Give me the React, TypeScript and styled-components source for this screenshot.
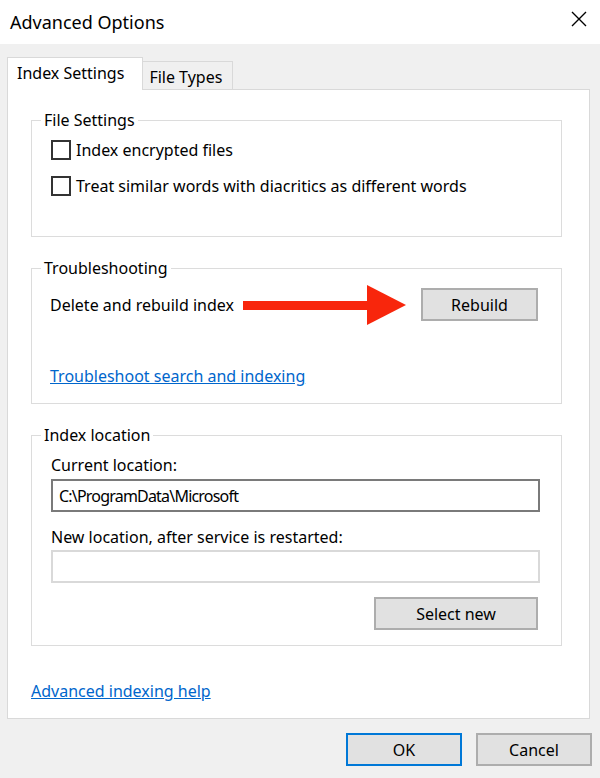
import React from 'react';
import styled, { createGlobalStyle } from 'styled-components';

const colors = {
    face: '#f0f0f0',
    white: '#ffffff',
    text: '#000000',
    panelBorder: '#d9d9d9',
    groupBorder: '#dcdcdc',
    buttonFace: '#e1e1e1',
    buttonBorder: '#adadad',
    focus: '#0078d7',
    link: '#0066cc',
    arrow: '#f8260c',
};

const GlobalStyle = createGlobalStyle`
    html, body {
        margin: 0;
        padding: 0;
        background: ${colors.white};
    }
    body {
        font-family: "Segoe UI", "Noto Sans", "Open Sans", sans-serif;
        font-size: 16px;
        color: ${colors.text};
    }
    * {
        box-sizing: border-box;
    }
`;

const Window = styled.div`
    width: 600px;
    height: 778px;
    display: flex;
    flex-direction: column;
    background: ${colors.face};
`;

const TitleBar = styled.div`
    height: 44px;
    flex-shrink: 0;
    background: ${colors.white};
    display: flex;
    align-items: center;
    justify-content: space-between;
    padding: 0 13px 0 10px;
`;

const Title = styled.span`
    font-size: 18px;
    line-height: 24px;
    margin-top: -1px;
`;

const CloseIcon = styled.svg`
    width: 16px;
    height: 16px;
    margin-top: -6px;
`;

const Body = styled.div`
    flex: 1;
    display: flex;
    flex-direction: column;
    padding: 13px 10px 0 7px;
`;

const TabStrip = styled.div`
    display: flex;
    align-items: flex-end;
    height: 32px;
    position: relative;
    z-index: 1;
`;

const Tab = styled.div<{ $active?: boolean }>`
    display: flex;
    align-items: center;
    border: 1px solid ${colors.panelBorder};
    line-height: 20px;
    ${({ $active }) => $active ? `
        height: 33px;
        margin-bottom: -1px;
        padding: 0 18px 2px 9px;
        background: ${colors.white};
        border-bottom: none;
    ` : `
        height: 28px;
        padding: 3px 10px 0 6px;
        background: ${colors.face};
        border-left: none;
        border-bottom: none;
    `}
`;

const Panel = styled.div`
    height: 630px;
    background: ${colors.white};
    border: 1px solid ${colors.panelBorder};
    display: flex;
    flex-direction: column;
    gap: 20px;
    padding: 19px 27px 0 23px;
`;

const Group = styled.fieldset`
    margin: 0;
    padding: 0;
    border: 1px solid ${colors.groupBorder};
    min-width: 0;
`;

const Legend = styled.legend`
    margin-left: 9px;
    padding: 0 3px;
    line-height: 22px;
`;

const GroupBody = styled.div<{ $pad: string; $gap?: number }>`
    display: flex;
    flex-direction: column;
    padding: ${({ $pad }) => $pad};
    gap: ${({ $gap }) => $gap ?? 0}px;
`;

const CheckRow = styled.label`
    display: flex;
    align-items: center;
    height: 20px;
    line-height: 20px;
`;

const Box = styled.span`
    width: 20px;
    height: 20px;
    border: 2px solid #333333;
    background: ${colors.white};
    margin-right: 5px;
    flex-shrink: 0;
`;

const ActionRow = styled.div`
    display: flex;
    align-items: center;
    height: 33px;
`;

const Label = styled.div`
    line-height: 22px;
`;

const Arrow = styled.svg`
    margin-left: auto;
    margin-right: 14px;
    width: 164px;
    height: 42px;
    flex-shrink: 0;
`;

const Button = styled.button<{ $width: number; $default?: boolean }>`
    width: ${({ $width }) => $width}px;
    height: 33px;
    background: ${colors.buttonFace};
    border: ${({ $default }) => $default ? `2px solid ${colors.focus}` : `2px solid ${colors.buttonBorder}`};
    font-family: inherit;
    font-size: 16px;
    color: ${colors.text};
    padding: 0;
    flex-shrink: 0;
`;

const Link = styled.a<{ $top: number }>`
    color: ${colors.link};
    text-decoration: underline;
    line-height: 22px;
    margin-top: ${({ $top }) => $top}px;
    align-self: flex-start;
    cursor: pointer;
`;

const TextBox = styled.div<{ $disabled?: boolean }>`
    height: 33px;
    border: ${({ $disabled }) => $disabled ? `2px solid ${colors.panelBorder}` : '2px solid #7a7a7a'};
    background: ${colors.white};
    display: flex;
    align-items: center;
    padding: 0 6px;
    letter-spacing: -0.8px;
`;

const RightAlign = styled.div`
    display: flex;
    justify-content: flex-end;
    padding-right: 2px;
`;

const Footer = styled.div`
    display: flex;
    justify-content: flex-end;
    gap: 14px;
    margin-top: 14px;
    margin-right: -2px;
`;

const App: React.FC = () => {
    return (
        <>
            <GlobalStyle />
            <Window>
                <TitleBar>
                    <Title>Advanced Options</Title>
                    <CloseIcon viewBox="0 0 16 16">
                        <path d="M1 1 L15 15 M15 1 L1 15" stroke="#000" strokeWidth="1.4" fill="none" />
                    </CloseIcon>
                </TitleBar>
                <Body>
                    <TabStrip>
                        <Tab $active>Index Settings</Tab>
                        <Tab>File Types</Tab>
                    </TabStrip>
                    <Panel>
                        <Group>
                            <Legend>File Settings</Legend>
                            <GroupBody $pad="9px 0 40px 19px" $gap={16}>
                                <CheckRow><Box />Index encrypted files</CheckRow>
                                <CheckRow><Box />Treat similar words with diacritics as different words</CheckRow>
                            </GroupBody>
                        </Group>
                        <Group>
                            <Legend>Troubleshooting</Legend>
                            <GroupBody $pad="9px 23px 16px 18px">
                                <ActionRow>
                                    <Label>Delete and rebuild index</Label>
                                    <Arrow viewBox="0 0 164 42">
                                        <rect x="0" y="17" width="126" height="9" fill={colors.arrow} />
                                        <polygon points="124,1 163,21 124,41" fill={colors.arrow} />
                                    </Arrow>
                                    <Button $width={117}>Rebuild</Button>
                                </ActionRow>
                                <Link $top={44}>Troubleshoot search and indexing</Link>
                            </GroupBody>
                        </Group>
                        <Group>
                            <Legend>Index location</Legend>
                            <GroupBody $pad="8px 21px 15px 19px">
                                <Label>Current location:</Label>
                                <TextBox style={{ marginTop: 3 }}>C:\ProgramData\Microsoft</TextBox>
                                <Label style={{ marginTop: 14 }}>New location, after service is restarted:</Label>
                                <TextBox $disabled style={{ marginTop: 2 }} />
                                <RightAlign style={{ marginTop: 14 }}>
                                    <Button $width={164}>Select new</Button>
                                </RightAlign>
                            </GroupBody>
                        </Group>
                        <Link $top={14}>Advanced indexing help</Link>
                    </Panel>
                    <Footer>
                        <Button $width={116} $default>OK</Button>
                        <Button $width={116}>Cancel</Button>
                    </Footer>
                </Body>
            </Window>
        </>
    );
};

export default App;
